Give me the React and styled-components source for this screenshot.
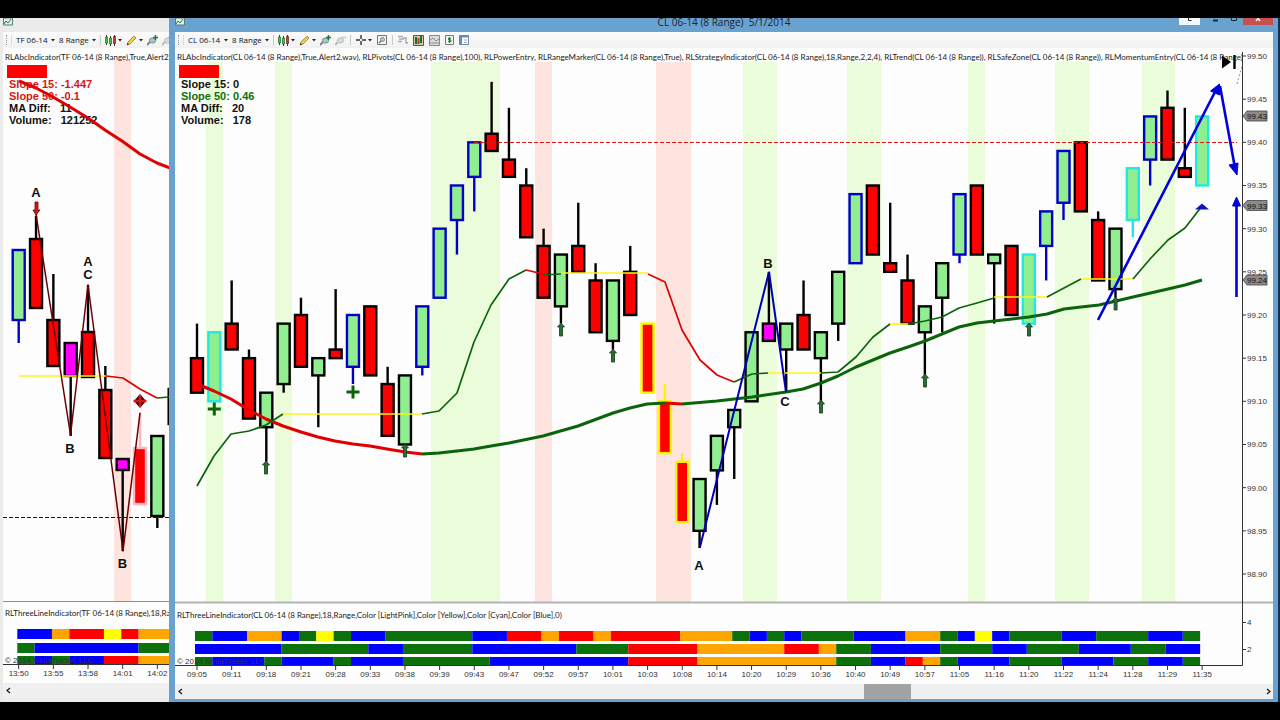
import React from "react";
import styled, { createGlobalStyle } from "styled-components";

const GlobalStyle = createGlobalStyle`
  * {
    box-sizing: border-box;
  }
  body {
    margin: 0;
    background: #000;
    font-family: "Liberation Sans", Arial, sans-serif;
  }
`;

const Screen = styled.main`
  min-height: 100vh;
  padding: 18px 0;
  background: #000;
`;

const Desktop = styled.div`
  display: flex;
  align-items: stretch;
  overflow: hidden;
  background: #12324f;
  padding-right: 2px;
`;

const Window = styled.section`
  display: flex;
  flex-direction: column;
  min-width: 0;
  flex: ${({ $active }) => ($active ? "1 1 0" : "0 0 169px")};
  background: ${({ $active }) => ($active ? "#6aa2cf" : "#ebebeb")};
  padding: ${({ $active }) => ($active ? "0 5px 3px 6px" : "0 0 4px 3px")};
`;

const TitleBar = styled.header`
  position: relative;
  display: flex;
  justify-content: space-between;
  align-items: flex-start;
  height: 14px;
`;

const Title = styled.h1`
  position: absolute;
  left: 0;
  right: 0;
  top: -2px;
  margin: 0;
  text-align: center;
  white-space: pre;
  font: 400 10px/12px "Open Sans", sans-serif;
  color: #16222e;
`;

const Controls = styled.div`
  display: flex;
  position: relative;
`;

const ControlButton = styled.button`
  width: ${({ $width }) => $width || 18}px;
  height: 7px;
  padding: 0;
  border: 0;
  display: flex;
  justify-content: center;
  background: ${({ $bg }) => $bg || "transparent"};
  color: #1b2b3a;
`;

const LinkButton = styled(ControlButton)`
  margin-right: 7px;
`;

const Toolbar = styled.div`
  display: flex;
  align-items: center;
  gap: 4px;
  height: 16px;
  padding-left: 3px;
  overflow: hidden;
  background: linear-gradient(#fbfbfb, #f1f1f1);
`;

const Grip = styled.span`
  flex: none;
  width: 6px;
  height: 10px;
  border-left: 1px dotted #9a9a9a;
  border-right: 1px solid #dcdcdc;
`;

const Divider = styled.span`
  flex: none;
  width: 1px;
  height: 10px;
  background: #c8c8c8;
`;

const Picker = styled.label`
  flex: none;
  display: flex;
  align-items: center;
  gap: 3px;
`;

const Select = styled.select`
  appearance: none;
  border: 0;
  padding: 0;
  margin: 0;
  background: none;
  font: 400 8px/12px "Open Sans", sans-serif;
  color: #111;
`;

const ToolButton = styled.button`
  flex: none;
  display: flex;
  align-items: center;
  gap: 2px;
  padding: 0;
  border: 0;
  background: none;
`;

const ToolGroup = styled.div`
  flex: none;
  display: flex;
  align-items: center;
  gap: 5px;
`;

const ChartArea = styled.div`
  position: relative;
  overflow: hidden;
  background: #fdfdfd;
`;

const Chart = styled.svg`
  display: block;
  width: 100%;
  height: auto;
`;

const ChartNote = styled.p`
  position: absolute;
  left: 2px;
  top: ${({ $top }) => $top}px;
  max-width: ${({ $max }) => $max || "none"};
  margin: 0;
  overflow: hidden;
  white-space: nowrap;
  font-family: Lato, "Liberation Sans", sans-serif;
  font-size: 8px;
  line-height: 10px;
  color: #222;
`;

const Stats = styled.div`
  position: absolute;
  left: 6px;
  top: 17px;
`;

const Signal = styled.div`
  width: 40px;
  height: 13px;
  margin-left: -2px;
  background: #f00;
`;

const Stat = styled.p`
  margin: 0;
  white-space: pre;
  font-weight: 700;
  font-size: 11px;
  line-height: 12px;
  color: ${({ $color }) => $color || "#111"};
`;

const ScrollBar = styled.div`
  display: flex;
  align-items: stretch;
  height: 15px;
  background: #f0f0f0;
`;

const ScrollButton = styled.button`
  width: 10px;
  padding: 0;
  border: 0;
  background: none;
  color: #222;
  display: flex;
  align-items: center;
  justify-content: center;
`;

const Track = styled.div`
  flex: 1;
  display: flex;
`;

const Thumb = styled.div`
  width: 47px;
  margin-left: 63%;
  background: #a3a3a3;
`;

const STEP = 17.33;
const CANDLES = {
  r: { fill: "#ff0000", stroke: "#000" },
  g: { fill: "#90ee90", stroke: "#000" },
  b: { fill: "#90ee90", stroke: "#0000c8" },
  c: { fill: "#90ee90", stroke: "#1fe9e4" },
  y: { fill: "#ff0000", stroke: "#fff200" },
  m: { fill: "#ff00ff", stroke: "#000" },
  p: { fill: "#ff0000", stroke: "#ffb6c1" },
};
const LINES = { r: "#e00000", g: "#0b640b", y: "#fbf51c", b: "#0000c8", d: "#6d0000" };
const STRIPS = { r: "#ff0000", g: "#0b710b", b: "#0000ff", y: "#ffff00", o: "#ffa500" };

// kind, body top, body bottom, high, low - counted in ticks below 99.50
const clBars = [
  ["r", 35, 39, 31, 39], ["c", 32, 40, 32, 40], ["r", 31, 34, 26, 34], ["r", 35, 42, 34, 42],
  ["g", 39, 43, 39, 47], ["g", 31, 38, 31, 39], ["r", 30, 36, 28, 36], ["g", 35, 37, 35, 43],
  ["r", 34, 35, 27, 35], ["b", 30, 36, 30, 38], ["r", 29, 37, 29, 37], ["r", 38, 44, 36, 44],
  ["g", 37, 45, 37, 45], ["b", 29, 36, 29, 37], ["b", 20, 28, 20, 28], ["b", 15, 19, 15, 23],
  ["b", 10, 14, 10, 18], ["r", 9, 11, 3, 11], ["r", 12, 14, 6, 14], ["r", 15, 21, 13, 21],
  ["r", 22, 28, 20, 28], ["g", 23, 29, 23, 31], ["r", 22, 25, 17, 25], ["r", 26, 32, 24, 32],
  ["g", 26, 33, 26, 34], ["r", 25, 30, 22, 30], ["y", 31, 39, 31, 39], ["y", 40, 46, 38, 46],
  ["y", 47, 54, 46, 54], ["g", 49, 55, 49, 57], ["g", 44, 48, 44, 52], ["g", 41, 43, 41, 49],
  ["g", 32, 40, 32, 40], ["m", 31, 33, 25, 33], ["g", 31, 34, 31, 39], ["r", 30, 34, 26, 34],
  ["g", 32, 35, 32, 40], ["g", 25, 31, 25, 33], ["b", 16, 24, 16, 24], ["r", 15, 23, 15, 23],
  ["r", 24, 25, 17, 25], ["r", 26, 31, 23, 31], ["g", 29, 32, 29, 37], ["g", 24, 28, 24, 32],
  ["b", 16, 23, 16, 24], ["r", 15, 23, 15, 23], ["g", 23, 24, 23, 31], ["r", 22, 30, 22, 30],
  ["c", 23, 31, 23, 31], ["b", 18, 22, 18, 26], ["b", 11, 17, 11, 19], ["r", 10, 18, 10, 18],
  ["r", 19, 26, 18, 26], ["g", 20, 27, 20, 28], ["c", 13, 19, 13, 21], ["b", 7, 12, 7, 15],
  ["r", 6, 12, 4, 12], ["r", 13, 14, 6, 14], ["c", 7, 15, 7, 15],
];
const tickY = (k) => 56 + k * 8.633;
const clCandles = clBars.map(([kind, ...ks]) => [kind, ...ks.map(tickY)]);

const tfCandles = [
  ["b", 250, 320, 250, 343], ["r", 239, 308, 216, 308], ["r", 320, 366, 274, 366],
  ["m", 343, 376, 343, 436], ["r", 332, 377, 285, 377], ["r", 390, 458, 366, 458],
  ["m", 459, 470, 459, 551], ["p", 448, 504, 412, 504], ["g", 436, 516, 436, 528],
  ["g", 389, 424, 389, 424],
];

const clBands = [
  [206, 17, "g"], [275, 17, "g"], [431, 69, "g"], [535, 17, "r"], [656, 35, "r"],
  [743, 34, "g"], [847, 34, "g"], [968, 17, "g"], [1055, 34, "g"], [1142, 33, "g"],
];

const clTrend = [
  ["r", "197,384 214,391 231,399 249,410 266,419 283,426 301,432 318,437 335,441 353,444 370,446 387,449 405,452 422,454"],
  ["g", "422,454 439,453 457,451 474,449 491,446 509,443 543,436 578,426 613,413 630,408 647,404 665,403"],
  ["r", "665,403 682,404"],
  ["g", "682,404 717,401 752,397 786,392 803,389 821,383 838,376 856,367 873,360 890,353 908,347 925,341 942,334 959,327 977,323 994,321 1012,319 1029,317 1047,314 1064,309 1081,307 1099,305 1116,301 1133,297 1168,289 1185,285 1202,280"],
];
const clFast = [
  ["g", "197,486 214,456 231,434 249,431 266,425 283,414"],
  ["y", "283,414 422,414"],
  ["g", "422,414 439,411 457,393 474,342 491,305 509,279 526,270"],
  ["r", "526,270 543,274"],
  ["g", "543,275 561,274"],
  ["y", "561,273 648,273"],
  ["r", "648,274 665,282 682,330 700,360 717,375 734,382"],
  ["g", "734,382 752,374 768,373"],
  ["y", "768,373 821,373"],
  ["g", "821,373 838,372 856,357 873,337 890,324"],
  ["y", "890,324 908,324"],
  ["g", "908,324 925,321 942,317 959,308 977,303 994,298"],
  ["y", "994,297 1047,297"],
  ["g", "1047,297 1064,288 1081,279"],
  ["y", "1081,279 1133,279"],
  ["g", "1133,279 1150,259 1168,240 1185,228 1202,206"],
];

const clStrips = [
  "g1b2o2b1g1y1g1b2g5b2r2o1r2o1r4o3g1b1g1b1g3b3o2g1b1y1b1g3b2g3b2g1",
  "b5g5b2g4b6g3r4o5r2o1g2b4g3b2g3b3g2b2",
  "g1b3g1b3g1b3g5b8r4o8g2b2r1o1g1b3g3b3g2b2g1",
];
const tfStrips = ["b2o1r2y1r1o2", "g1b6g2", "g1b1g1b2r2o2"];

const clTimes = [
  "09:05", "09:11", "09:18", "09:21", "09:28", "09:33", "09:38", "09:39", "09:43", "09:47",
  "09:52", "09:57", "10:01", "10:03", "10:08", "10:14", "10:20", "10:29", "10:36", "10:40",
  "10:49", "10:57", "11:05", "11:16", "11:20", "11:22", "11:24", "11:28", "11:29", "11:35",
];
const tfTimes = ["13:50", "13:55", "13:58", "14:01", "14:02"];

const prices = [
  "99.50", "99.45", "99.40", "99.35", "99.30", "99.25", "99.20",
  "99.15", "99.10", "99.05", "99.00", "98.95", "98.90",
];

const axisFont = { fontFamily: '"Liberation Sans", Arial, sans-serif', fontSize: 8, fill: "#333" };
const markFont = { fontFamily: '"Liberation Sans", Arial, sans-serif', fontSize: 13, fontWeight: 700, textAnchor: "middle" };

const Candle = ({ x, kind, top, bottom, high, low }) => {
  const { fill, stroke } = CANDLES[kind];
  return (
    <g stroke={stroke} strokeWidth="2.4">
      {high < top && <path d={`M${x} ${high}V${top}`} />}
      {low > bottom && <path d={`M${x} ${bottom}V${low}`} />}
      <rect x={x - 6} y={top} width="12" height={bottom - top} fill={fill} />
    </g>
  );
};

const Candles = ({ data, start }) =>
  data.map(([kind, top, bottom, high, low], i) => (
    <Candle key={i} x={start + i * STEP} kind={kind} top={top} bottom={bottom} high={high} low={low} />
  ));

const Lines = ({ data, width }) => (
  <g fill="none" strokeWidth={width} strokeLinejoin="round">
    {data.map(([color, points]) => (
      <polyline key={points} points={points} stroke={LINES[color]} />
    ))}
  </g>
);

const Strips = ({ rows, start, tops }) =>
  rows.map((row, r) => {
    let cell = 0;
    return (
      <g key={r}>
        {row.match(/[a-z]\d+/g).map((part) => {
          const count = Number(part.slice(1));
          const x = start + cell * STEP;
          cell += count;
          return (
            <rect key={x} x={x} y={tops[r]} width={count * STEP} height={r === 2 ? 8 : 10} fill={STRIPS[part[0]]} />
          );
        })}
      </g>
    );
  });

const TimeAxis = ({ times, start, y }) => (
  <g {...axisFont} textAnchor="middle">
    {times.map((time, i) => (
      <g key={time}>
        <path d={`M${start + i * STEP * 2} ${y}v4`} stroke="#333" />
        <text x={start + i * STEP * 2} y={y + 11}>{time}</text>
      </g>
    ))}
  </g>
);

const UpMark = ({ x, y }) => (
  <path d={`M${x} ${y}l3.5 4h-2v9h-3v-9h-2z`} fill="#2f6b3a" stroke="#123d18" strokeWidth="0.8" />
);

const PlusMark = ({ x, y }) => (
  <path d={`M${x - 6.5} ${y}h13M${x} ${y - 6.5}v13`} stroke="#0b640b" strokeWidth="3" />
);

const PriceTag = ({ y, children }) => (
  <g>
    <path d={`M1243 ${y}l4-5h20v10h-20z`} fill="#8b8b8b" stroke="#444" strokeWidth="0.8" />
    <text {...axisFont} x="1247" y={y + 3} fill="#111">{children}</text>
  </g>
);

const ClChart = () => (
  <Chart viewBox="175 48 1098 636" role="img" aria-label="CL 06-14 price chart">
    {clBands.map(([x, width, tone]) => (
      <rect key={x} x={x} y="62" width={width} height="540" fill={tone === "g" ? "#eafcda" : "#fde4de"} />
    ))}
    <Candles data={clCandles} start={197} />
    <path d="M474 142.5H1237" stroke="#d81818" strokeDasharray="4 2" />
    <Lines data={clTrend} width="3" />
    <Lines data={clFast} width="1.7" />
    {[[266, 461], [405, 444], [561, 323], [613, 349], [821, 400], [925, 374], [1029, 323], [1115.6, 297]].map(([x, y]) => (
      <UpMark key={x} x={x} y={y} />
    ))}
    <PlusMark x={214.3} y={409} />
    <PlusMark x={353} y={392} />
    <polyline points="700,547 769,272 786,392" fill="none" stroke="#0000b4" strokeWidth="2" />
    <g {...markFont} fill="#111">
      <text x="699" y="570">A</text>
      <text x="768" y="268">B</text>
      <text x="785" y="406">C</text>
    </g>

    <g stroke="#0000dc" strokeWidth="2.6" fill="#0000dc">
      <path d="M1098 320L1217 88M1220 86L1235 168M1236.500 297V204" />
      <path d="M1219.500 84l-9 7 9 4zM1237 175l-8-10 9-2zM1236.500 197l4 9h-8z" strokeWidth="1" />
    </g>
    <path d="M1195 209.500l7-6 7 6z" fill="#1414b4" />
    <path d="M1222 55.500l9 6.500-9 6.500z" />
    <path d="M1234.500 55v14" stroke="#000" strokeWidth="2.4" />
    <path d="M1237 84l5-18" stroke="#777" strokeWidth="0.8" strokeDasharray="2 2" />

    <path d="M175 602.500H1273" stroke="#b4b4b4" strokeWidth="2" />
    <path d="M1242.500 52V665.500H175" fill="none" stroke="#333" />
    {prices.map((price, i) => (
      <g key={price}>
        <path d={`M1242 ${tickY(i * 5)}h4`} stroke="#333" />
        <text {...axisFont} x="1247" y={tickY(i * 5) + 3}>{price}</text>
      </g>
    ))}
    <PriceTag y={116}>99.43</PriceTag>
    <PriceTag y={205.5}>99.33</PriceTag>
    <PriceTag y={280}>99.24</PriceTag>
    <path d="M1242 622.500h4M1242 649.500h4" stroke="#333" />
    <text {...axisFont} x="1247" y="625">4</text>
    <text {...axisFont} x="1247" y="652">2</text>

    <Strips rows={clStrips} start={195} tops={[631, 644, 657]} />
    <TimeAxis times={clTimes} start={197} y={666} />
    <text {...axisFont} x="177" y="664">© 2014 NinjaTrader, LLC</text>
  </Chart>
);

const TfChart = () => (
  <Chart viewBox="3 48 166 635" role="img" aria-label="TF 06-14 price chart">
    <rect x="114" y="60" width="17" height="541" fill="#fde4de" />
    <Candles data={tfCandles} start={18.7} />
    <path d="M3 517.500H169" stroke="#0000c8" strokeWidth="1.2" strokeDasharray="4 2" />
    <Lines
      data={[
        ["y", "19,376 106,376"],
        ["r", "106,376 123,378 140,389 157,398"],
        ["g", "157,398 169,397"],
      ]}
      width="1.7"
    />
    <Lines data={[["d", "36,214 70.500,435 88,285 123,551 140,413"]]} width="1.5" />
    <path d="M36 215l-3-5h2v-8h3v8h2z" fill="#d01818" stroke="#6d0000" strokeWidth="0.8" />
    <path d="M140 394l6 7-6 7-6-7z" fill="#400" />
    <path d="M133.500 401h13M140 395v12" stroke="#d01818" strokeWidth="2.500" />
    <g {...markFont} fill="#111">
      <text x="36" y="197">A</text>
      <text x="88" y="266">A</text>
      <text x="88" y="279">C</text>
      <text x="70" y="453">B</text>
      <text x="122.500" y="568">B</text>
    </g>

    <path d="M3 601.500H169" stroke="#8c8c8c" />
    <path d="M3 664.500H169" stroke="#333" />
    <Strips rows={tfStrips} start={17.3} tops={[629, 643, 656]} />
    <TimeAxis times={tfTimes} start={18.7} y={665} />
    <text {...axisFont} x="5" y="663">© 2014 NinjaTrader, LLC</text>
  </Chart>
);

const TrendOverlay = styled(Chart)`
  position: absolute;
  left: 0;
  top: 0;
`;

const AppIcon = () => (
  <svg width="10" height="8" viewBox="0 0 10 8">
    <path d="M.5 0h9v7h-9z" fill="#dfeee8" stroke="#5b7d7b" />
    <path d="M1 6l2-3 2 2 3-4" fill="none" stroke="#2c7f58" />
  </svg>
);

const Caret = () => (
  <svg width="4" height="3" viewBox="0 0 4 3">
    <path d="M0 0h4l-2 2.500z" fill="#222" />
  </svg>
);

const BarsIcon = () => (
  <svg width="11" height="11" viewBox="0 0 11 11">
    <path d="M1.500 0v10M5.500 1v10M9.500 0v11" stroke="#333" />
    <path d="M.5 2h2v6h-2zM4.500 3h2v6h-2z" fill="#3fbf3f" stroke="#20702a" strokeWidth=".7" />
    <path d="M8.500 1.500h2v7h-2z" fill="#c43b3b" stroke="#6b2020" strokeWidth=".7" />
  </svg>
);

const PencilIcon = () => (
  <svg width="11" height="11" viewBox="0 0 11 11">
    <path d="M1 10l1-3 6-6 2 2-6 6z" fill="#ecd04a" stroke="#8f7b2d" strokeWidth=".8" />
    <path d="M1 10l.6-2 1.400 1.400z" fill="#222" />
  </svg>
);

const ZoomIcon = ({ plus }) => (
  <svg width="11" height="11" viewBox="0 0 11 11" opacity={plus ? 1 : 0.5}>
    <path d="M0 10l4-4" stroke="#7b868d" strokeWidth="2" />
    <ellipse cx="5.500" cy="5.500" rx="3.200" ry="2.600" fill="#aec3c9" stroke="#7b8f95" />
    <path d={plus ? "M6 2.500h5M8.500 0v5" : "M6 2.500h5"} stroke={plus ? "#1f7d32" : "#999"} strokeWidth="1.500" />
  </svg>
);

const CrossIcon = () => (
  <svg width="10" height="10" viewBox="0 0 10 10">
    <path d="M5 0v4M5 6v4M0 5h4M6 5h4" stroke="#333" strokeWidth="1.400" />
  </svg>
);

const FrameZoomIcon = () => (
  <svg width="10" height="10" viewBox="0 0 10 10">
    <path d="M.5 .5h9v9h-9z" fill="#f2f4f5" stroke="#777" />
    <circle cx="5.500" cy="4.500" r="2" fill="#b7cbd2" stroke="#7c8b91" />
    <path d="M2 8l2-2" stroke="#777" strokeWidth="1.400" />
  </svg>
);

const LinkIcon = () => (
  <svg width="10" height="10" viewBox="0 0 10 10">
    <path d="M0 1.500h5M0 6.500h4M5 3h3v5h2M1 4h5" fill="none" stroke="#aaa" strokeWidth="1.400" />
  </svg>
);

const TraderIcon = () => (
  <svg width="11" height="11" viewBox="0 0 11 11">
    <path d="M.5 .5h10v10h-10z" fill="#cdd1a6" stroke="#555" />
    <path d="M3 2v7M8 1v7" stroke="#256b2c" strokeWidth="2" />
    <path d="M5.500 3v6" stroke="#b23737" strokeWidth="2" />
  </svg>
);

const PictureIcon = () => (
  <svg width="11" height="11" viewBox="0 0 11 11">
    <path d="M.5 .5h10v10h-10z" fill="#dcdcdc" stroke="#888" />
    <path d="M1 5l3-2 3 3 3-2M1 8h9" fill="none" stroke="#8a8a8a" />
  </svg>
);

const DollarIcon = () => (
  <svg width="9" height="10" viewBox="0 0 9 10">
    <path d="M.5 .5h8v9h-8z" fill="#f2f7f1" stroke="#777" />
    <path d="M6 3.200H3.500v1.700H6v1.700H3M4.500 2v6" fill="none" stroke="#257a2d" />
  </svg>
);

const PanelIcon = () => (
  <svg width="10" height="10" viewBox="0 0 10 10">
    <path d="M.5 .5h9v9h-9z" fill="#fff" stroke="#6f86a5" />
    <path d="M0 1.500h10M2 2v8" stroke="#6489c4" strokeWidth="2" />
    <path d="M5 5h3M5 7.500h3" stroke="#aaa" />
  </svg>
);

const ChartTools = ({ symbol, full }) => (
  <Toolbar>
    <Grip />
    <Picker>
      <Select aria-label="Instrument" defaultValue={symbol}>
        <option>{symbol}</option>
      </Select>
      <Caret />
    </Picker>
    <Picker>
      <Select aria-label="Period" defaultValue="8 Range">
        <option>8 Range</option>
      </Select>
      <Caret />
    </Picker>
    <Divider />
    <ToolButton aria-label="Chart style"><BarsIcon /><Caret /></ToolButton>
    <ToolButton aria-label="Drawing tools"><PencilIcon /><Caret /></ToolButton>
    <ToolButton aria-label="Zoom in"><ZoomIcon plus /></ToolButton>
    <ToolButton aria-label="Zoom out"><ZoomIcon /></ToolButton>
    {full && (
      <ToolGroup>
        <Divider />
        <ToolButton aria-label="Crosshair"><CrossIcon /><Caret /></ToolButton>
        <ToolButton aria-label="Zoom to frame"><FrameZoomIcon /></ToolButton>
        <Divider />
        <ToolButton aria-label="Data series"><LinkIcon /></ToolButton>
        <ToolButton aria-label="Chart trader"><TraderIcon /></ToolButton>
        <ToolButton aria-label="Indicators"><PictureIcon /></ToolButton>
        <ToolButton aria-label="Strategies"><DollarIcon /></ToolButton>
        <ToolButton aria-label="Properties"><PanelIcon /></ToolButton>
      </ToolGroup>
    )}
  </Toolbar>
);

const Arrow = ({ right }) => (
  <svg width="5" height="7" viewBox="0 0 5 7">
    <path d={right ? "M1 1l3 2.500-3 2.500" : "M4 1L1 3.500l3 2.500"} fill="none" stroke="currentColor" strokeWidth="1.400" />
  </svg>
);

const App = () => (
  <Screen>
    <GlobalStyle />
    <Desktop>
      <Window>
        <TitleBar>
          <AppIcon />
        </TitleBar>
        <ChartTools symbol="TF 06-14" />
        <ChartArea>
          <TfChart />
          <Stats>
            <Signal />
            <Stat $color="#d01818">Slope 15: -1.447</Stat>
            <Stat $color="#d01818">Slope 50: -0.1</Stat>
            <Stat>MA Diff:   11</Stat>
            <Stat>Volume:   121252</Stat>
          </Stats>
          <TrendOverlay viewBox="3 48 166 635" aria-hidden="true">
            <Lines data={[["r", "19,81 36,88 53,97 70,107 88,118 105,130 122,141 140,154 157,163 170,168"]]} width="3" />
          </TrendOverlay>
          <ChartNote $top={4}>RLAbcIndicator(TF 06-14 (8 Range),True,Alert2.wav)</ChartNote>
          <ChartNote $top={560}>RLThreeLineIndicator(TF 06-14 (8 Range),18,Range</ChartNote>
        </ChartArea>
        <ScrollBar>
          <ScrollButton aria-label="Scroll left"><Arrow /></ScrollButton>
        </ScrollBar>
      </Window>

      <Window $active>
        <TitleBar>
          <AppIcon />
          <Title>CL 06-14 (8 Range)  5/1/2014</Title>
          <Controls>
            <LinkButton $width={21} $bg="#f4f8fb" aria-label="Link">
              <svg width="8" height="6"><path d="M2.500 0v2.500h3" fill="none" stroke="#333" /></svg>
            </LinkButton>
            <ControlButton aria-label="Minimize">
              <svg width="8" height="6"><path d="M1 2.500h5" stroke="#1b2b3a" strokeWidth="2" /></svg>
            </ControlButton>
            <ControlButton aria-label="Maximize">
              <svg width="8" height="6"><path d="M1.500 0v2.500h5V0" fill="none" stroke="#1b2b3a" /></svg>
            </ControlButton>
            <ControlButton $width={30} $bg="#c8504f" aria-label="Close">
              <svg width="8" height="6"><path d="M2 3l2-2.500 2 2.500" fill="none" stroke="#fff" strokeWidth="1.500" /></svg>
            </ControlButton>
          </Controls>
        </TitleBar>
        <ChartTools symbol="CL 06-14" full />
        <ChartArea>
          <ClChart />
          <Stats>
            <Signal />
            <Stat>Slope 15: 0</Stat>
            <Stat $color="#0b710b">Slope 50: 0.46</Stat>
            <Stat>MA Diff:   20</Stat>
            <Stat>Volume:   178</Stat>
          </Stats>
          <ChartNote $top={4} $max="97%">
            RLAbcIndicator(CL 06-14 (8 Range),True,Alert2.wav), RLPivots(CL 06-14 (8 Range),100), RLPowerEntry, RLRangeMarker(CL 06-14 (8 Range),True), RLStrategyIndicator(CL 06-14 (8 Range),18,Range,2,2,4), RLTrend(CL 06-14 (8 Range)), RLSafeZone(CL 06-14 (8 Range)), RLMomentumEntry(CL 06-14 (8 Range),1,13,18,1)
          </ChartNote>
          <ChartNote $top={562}>
            RLThreeLineIndicator(CL 06-14 (8 Range),18,Range,Color [LightPink],Color [Yellow],Color [Cyan],Color [Blue],0)
          </ChartNote>
        </ChartArea>
        <ScrollBar>
          <ScrollButton aria-label="Scroll left"><Arrow /></ScrollButton>
          <Track>
            <Thumb />
          </Track>
          <ScrollButton aria-label="Scroll right"><Arrow right /></ScrollButton>
        </ScrollBar>
      </Window>
    </Desktop>
  </Screen>
);

export default App;
